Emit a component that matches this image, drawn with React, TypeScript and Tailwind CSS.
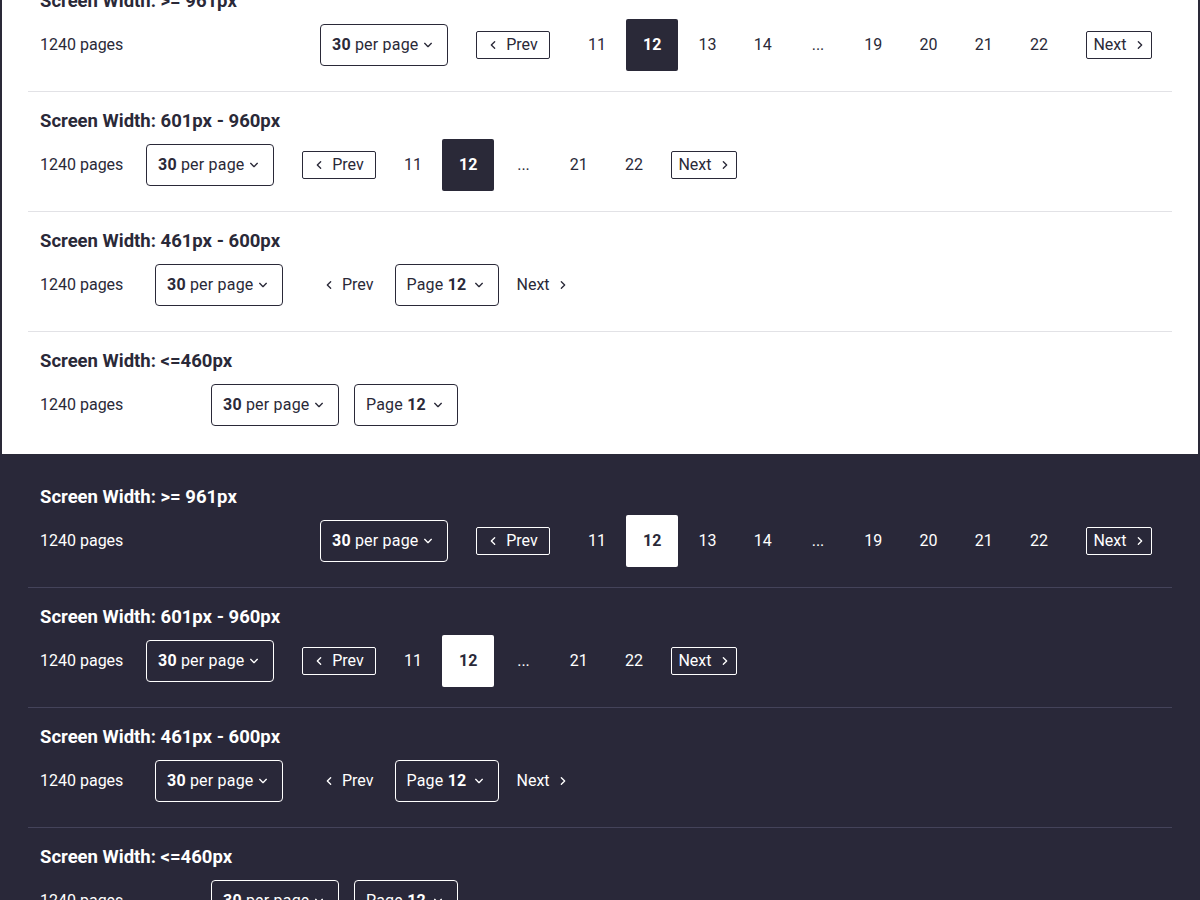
import React from "react";

type Theme = "light" | "dark";

const Chev = ({ dir = "down", size = 10 }: { dir?: "down" | "left" | "right"; size?: number }) => {
  const d = dir === "down" ? "M2 4l4 4 4-4" : dir === "left" ? "M8 2L4 6l4 4" : "M4 2l4 4-4 4";
  return (
    <svg width={size} height={size} viewBox="0 0 12 12" fill="none" stroke="currentColor" strokeWidth="1.6" strokeLinecap="round" strokeLinejoin="round">
      <path d={d} />
    </svg>
  );
};

const bd = (t: Theme) => (t === "light" ? "border-[#2a2938]" : "border-white");

const Select = ({ t, children, w, cls = "" }: { t: Theme; children: React.ReactNode; w: string; cls?: string }) => (
  <div className={`flex items-center justify-between h-[42px] border ${bd(t)} rounded-[4px] pl-[11px] pr-[14px] ${w} ${cls}`}>
    <span className="tracking-[0.2px]">{children}</span>
    <Chev />
  </div>
);

const PerPage = ({ t, cls }: { t: Theme; cls?: string }) => (
  <Select t={t} w="w-[128px]" cls={cls}>
    <b className="font-bold">30</b> per page
  </Select>
);
const PageSel = ({ t, cls }: { t: Theme; cls?: string }) => (
  <Select t={t} w="w-[104px]" cls={cls}>
    Page <b className="font-bold">12</b>
  </Select>
);

const PrevBtn = ({ t, cls = "" }: { t: Theme; cls?: string }) => (
  <div className={`flex items-center gap-[8px] h-[28px] w-[74px] justify-center border ${bd(t)} rounded-[2px] ${cls}`}>
    <Chev dir="left" />
    <span>Prev</span>
  </div>
);
const NextBtn = ({ t, cls = "" }: { t: Theme; cls?: string }) => (
  <div className={`flex items-center gap-[8px] h-[28px] w-[66px] justify-center border ${bd(t)} rounded-[2px] ${cls}`}>
    <span>Next</span>
    <Chev dir="right" />
  </div>
);

const Pages = ({ t, items, cls = "" }: { t: Theme; items: string[]; cls?: string }) => (
  <div className={`flex items-center gap-[3.25px] ${cls}`}>
    {items.map((p, i) =>
      p === "12" ? (
        <div
          key={i}
          className={`w-[52px] h-[52px] flex items-center justify-center font-bold rounded-[2px] ${
            t === "light" ? "bg-[#2a2938] text-white" : "bg-white text-[#2a2938]"
          }`}
        >
          12
        </div>
      ) : (
        <div key={i} className="w-[52px] h-[52px] flex items-center justify-center">
          {p}
        </div>
      )
    )}
  </div>
);

const Section = ({ t, title, children, last }: { t: Theme; title: string; children: React.ReactNode; last?: boolean }) => (
  <div
    className={`pt-[17px] pb-[20px] px-[12px] ${last ? "" : "border-b"} ${
      t === "light" ? "border-[#e2e2e6]" : "border-[#44435a]"
    }`}
  >
    <div className="text-[18.5px] leading-[24px] font-bold">{title}</div>
    <div className="mt-[6px] h-[52px] flex items-center">{children}</div>
  </div>
);

const Group = ({ t }: { t: Theme }) => (
  <>
    <Section t={t} title="Screen Width: >= 961px">
      <span>1240 pages</span>
      <div className="ml-auto mr-[8px] flex items-center">
        <PerPage t={t} />
        <PrevBtn t={t} cls="ml-[28px]" />
        <Pages t={t} cls="ml-[21px]" items={["11", "12", "13", "14", "...", "19", "20", "21", "22"]} />
        <NextBtn t={t} cls="ml-[21px]" />
      </div>
    </Section>
    <Section t={t} title="Screen Width: 601px - 960px">
      <span className="w-[84px]">1240 pages</span>
      <PerPage t={t} cls="ml-[22px]" />
      <PrevBtn t={t} cls="ml-[28px]" />
      <Pages t={t} cls="ml-[11px]" items={["11", "12", "...", "21", "22"]} />
      <NextBtn t={t} cls="ml-[11px]" />
    </Section>
    <Section t={t} title="Screen Width: 461px - 600px">
      <span className="w-[84px]">1240 pages</span>
      <PerPage t={t} cls="ml-[31px]" />
      <div className="ml-[41px] flex items-center gap-[8px]">
        <Chev dir="left" />
        <span>Prev</span>
      </div>
      <PageSel t={t} cls="ml-[21px]" />
      <div className="ml-[18px] flex items-center gap-[8px]">
        <span>Next</span>
        <Chev dir="right" />
      </div>
    </Section>
    <Section t={t} title="Screen Width: <=460px" last>
      <span className="w-[84px]">1240 pages</span>
      <PerPage t={t} cls="ml-[87px]" />
      <PageSel t={t} cls="ml-[15px]" />
    </Section>
  </>
);

export default function App() {
  return (
    <div className="w-[1200px] h-[900px] overflow-hidden text-[16px]" style={{ fontFamily: "Roboto, 'Liberation Sans', sans-serif" }}>
      <div className="bg-white text-[#2a2938] border-x-2 border-b border-[#2a2938] mt-[-28px] px-[26px] pb-[3px]">
        <Group t="light" />
      </div>
      <div className="bg-[#292839] text-white px-[28px] pt-[13px] pb-[40px]">
        <Group t="dark" />
      </div>
    </div>
  );
}
